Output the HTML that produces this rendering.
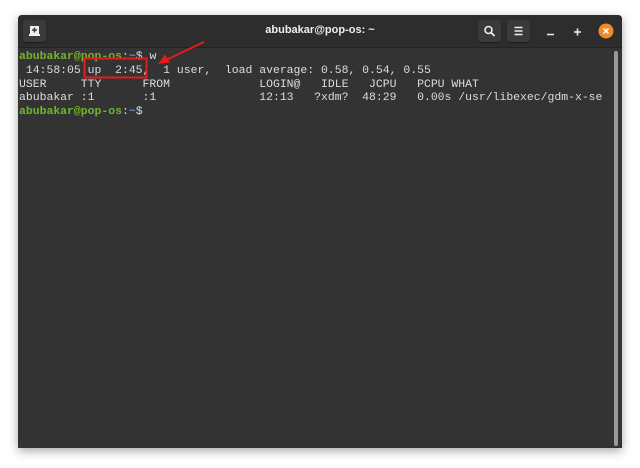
<!DOCTYPE html>
<html><head><style>
body{margin:0;width:640px;height:468px;background:#fff;position:relative;overflow:hidden;font-family:"Liberation Sans",sans-serif}
.win{position:absolute;left:18px;top:15px;width:604px;height:433px;background:#333;box-shadow:0 3px 10px rgba(0,0,0,.35);border-radius:4px 4px 0 0;overflow:hidden}
.tb{position:absolute;left:0;top:0;width:604px;height:32px;background:#2d2d2d;border-bottom:1px solid #222}
.btn{position:absolute;top:5px;width:23px;height:22px;background:#3a3a3a;border-radius:3px;box-shadow:0 1px 1px #1c1c1c}
.title{position:absolute;left:0;right:0;top:9px;text-align:center;color:#eee;font-weight:bold;font-size:11px}
pre{position:absolute;left:1px;top:35px;margin:0;font-family:"Liberation Mono",monospace;font-size:11.45px;line-height:13.8px;color:#ddd}
.g{color:#73b62c;font-weight:bold}.b{color:#5d8fd0;font-weight:bold}
.sb{position:absolute;left:596px;top:36px;width:4px;height:395px;background:#9a9a9a;border-radius:2px}
</style></head><body>
<div class="win">
<div class="tb">
<div class="btn" style="left:5px"><svg width="23" height="22"><rect x="7" y="6" width="9" height="8" fill="#eee"/><rect x="6" y="14" width="11" height="2" fill="#eee"/><path d="M11.5 7.5v5M9 10h5" stroke="#3a3a3a" stroke-width="1.5"/></svg></div>
<div class="title">abubakar@pop-os: ~</div>
<div class="btn" style="left:460px"><svg width="23" height="22"><circle cx="10.5" cy="10" r="3.5" fill="none" stroke="#eee" stroke-width="1.6"/><path d="M13 12.5l3.5 3.5" stroke="#eee" stroke-width="1.8"/></svg></div>
<div class="btn" style="left:489px"><svg width="23" height="22"><path d="M7.5 7.5h8M7.5 11h8M7.5 14.5h8" stroke="#eee" stroke-width="1.4"/></svg></div>
<svg style="position:absolute;left:526px;top:8px" width="80" height="18"><path d="M3 11.5h7" stroke="#eee" stroke-width="1.6"/><path d="M30 9h7M33.5 5.5v7" stroke="#eee" stroke-width="1.6"/><circle cx="62" cy="8" r="7.5" fill="#f0892a"/><path d="M59.5 5.5l5 5M64.5 5.5l-5 5" stroke="#fff" stroke-width="1.5"/></svg>
</div>
<pre><span class="g">abubakar@pop-os</span>:<span class="b">~</span>$ w
 14:58:05 up  2:45,  1 user,  load average: 0.58, 0.54, 0.55
USER     TTY      FROM             LOGIN@   IDLE   JCPU   PCPU WHAT
abubakar :1       :1               12:13   ?xdm?  48:29   0.00s /usr/libexec/gdm-x-se
<span class="g">abubakar@pop-os</span>:<span class="b">~</span>$</pre>
<div class="sb"></div>
</div>
<svg style="position:absolute;left:0;top:0" width="640" height="468">
<rect x="84.5" y="58.5" width="62" height="19" fill="none" stroke="#e51b1b" stroke-width="2"/>
<path d="M204 42L166 60" stroke="#e51b1b" stroke-width="2"/>
<path d="M158 64l12-1.5-5-8z" fill="#e51b1b"/>
</svg>
</body></html>
